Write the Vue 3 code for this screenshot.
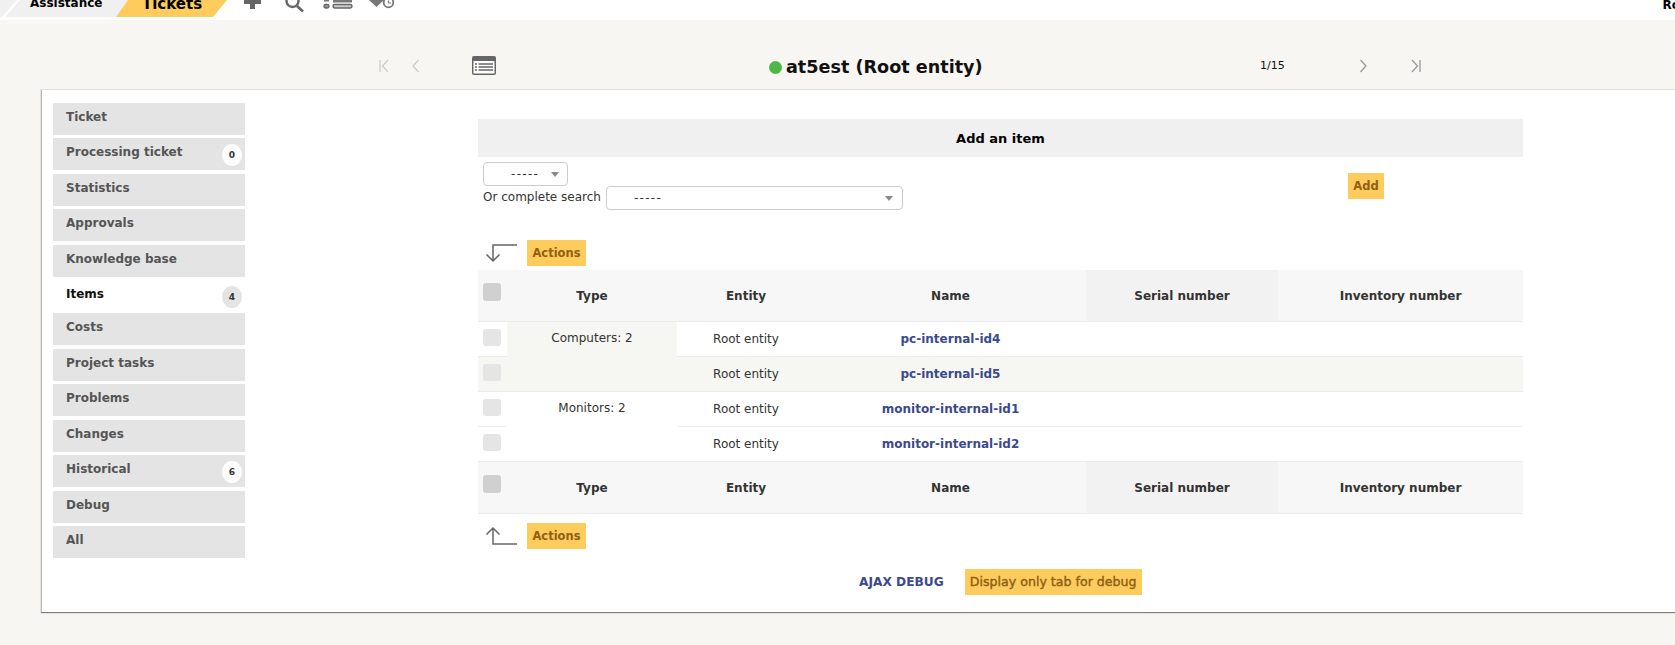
<script setup>
const tabs = [
  { label: 'Ticket' },
  { label: 'Processing ticket', badge: 0 },
  { label: 'Statistics' },
  { label: 'Approvals' },
  { label: 'Knowledge base' },
  { label: 'Items', badge: 4, active: true },
  { label: 'Costs' },
  { label: 'Project tasks' },
  { label: 'Problems' },
  { label: 'Changes' },
  { label: 'Historical', badge: 6 },
  { label: 'Debug' },
  { label: 'All' },
]
const cols = ['Type', 'Entity', 'Name', 'Serial number', 'Inventory number']
</script>

<template>
  <div class="page">
    <header class="top">
      <nav class="menu">
        <span class="crumb crumb-0"></span>
        <span class="crumb crumb-a">Assistance</span>
        <span class="crumb crumb-b">Tickets</span>
        <svg class="ic-plus" width="18" height="10" viewBox="0 0 18 10"><path d="M6 0h5v0h6v4h-6v5H6V4H0V0h6z" fill="#666"/></svg>
        <svg class="ic-search" width="22" height="14" viewBox="0 0 22 14"><circle cx="8.500" cy="1" r="6" fill="none" stroke="#666" stroke-width="2.400"/><path d="M13 6l6 5.500" stroke="#666" stroke-width="2.600"/></svg>
        <svg class="ic-list" width="30" height="10" viewBox="0 0 30 10"><rect x="1" y="0" width="5" height="1.500" fill="#777"/><rect x="1" y="4.500" width="5" height="3.500" rx="1.700" fill="#999" stroke="#666" stroke-width="1.400"/><rect x="10" y="0" width="19" height="2.500" fill="#777"/><rect x="10" y="4.500" width="19" height="3.500" rx="1.700" fill="#ccc" stroke="#666" stroke-width="1.400"/></svg>
        <svg class="ic-save" width="26" height="10" viewBox="0 0 26 10"><path d="M0 0h15l-7.500 7z" fill="#777"/><circle cx="19.500" cy="2.500" r="4.800" fill="none" stroke="#777" stroke-width="1.800"/><path d="M19.500 .5v2.500h2.500" fill="none" stroke="#777" stroke-width="1.200"/></svg>
      </nav>
      <span class="user">Root</span>
    </header>

    <div class="titlebar">
      <div class="pager-left">
        <svg width="10" height="14" viewBox="0 0 10 14"><path d="M1 1v12M9 1L3.500 7 9 13" fill="none" stroke="#ccc" stroke-width="1.300"/></svg>
        <svg class="prev" width="7" height="14" viewBox="0 0 7 14"><path d="M6.500 1L1 7l5.500 6" fill="none" stroke="#ccc" stroke-width="1.300"/></svg>
        <svg class="listicon" width="24" height="19" viewBox="0 0 24 19"><rect width="24" height="19" rx="2" fill="#666"/><rect x="1.500" y="5" width="21" height="12.500" fill="#fff"/><path d="M3 8h2M3 11h2M3 14h2M6.500 8H21M6.500 11H21M6.500 14H21" stroke="#666" stroke-width="1.400"/></svg>
      </div>
      <h1 class="title"><i class="dot"></i>at5est (Root entity)</h1>
      <div class="pager-right">
        <span class="count">1/15</span>
        <svg class="next" width="7" height="14" viewBox="0 0 7 14"><path d="M.5 1L6 7l-5.500 6" fill="none" stroke="#999" stroke-width="1.300"/></svg>
        <svg class="last" width="10" height="14" viewBox="0 0 10 14"><path d="M9 1v12M1 1l5.500 6L1 13" fill="none" stroke="#999" stroke-width="1.300"/></svg>
      </div>
    </div>

    <main class="card">
      <ul class="tabs">
        <li v-for="t in tabs" :key="t.label" class="tab" :class="{ active: t.active }">
          {{ t.label }}
          <span v-if="t.badge !== undefined" class="badge">{{ t.badge }}</span>
        </li>
      </ul>

      <section class="content">
        <div class="addhead">Add an item</div>
        <div class="addform">
          <div class="fields">
            <div class="select small"><span>-----</span><i class="caret"></i></div>
            <div class="searchline">
              <label>Or complete search</label>
              <div class="select large"><span>-----</span><i class="caret"></i></div>
            </div>
          </div>
          <button class="btn add">Add</button>
        </div>

        <div class="massive down">
          <svg width="34" height="20" viewBox="0 0 34 20"><path d="M33 2H9v16M2.500 11.500L9 18l6.500-6.500" fill="none" stroke="#666" stroke-width="1.500"/></svg>
          <button class="btn">Actions</button>
        </div>

        <table class="grid">
          <colgroup>
            <col class="c-check"><col class="c-type"><col class="c-entity"><col class="c-name"><col class="c-serial"><col class="c-inv">
          </colgroup>
          <thead>
            <tr>
              <th><i class="box head"></i></th>
              <th v-for="c in cols" :key="c" :class="{ sorted: c === 'Serial number' }">{{ c }}</th>
            </tr>
          </thead>
          <tbody>
            <tr>
              <td><i class="box"></i></td>
              <td rowspan="2" class="type tinted">Computers: 2</td>
              <td>Root entity</td>
              <td><a class="link">pc-internal-id4</a></td><td></td><td></td>
            </tr>
            <tr class="tinted">
              <td><i class="box"></i></td>
              <td>Root entity</td>
              <td><a class="link">pc-internal-id5</a></td><td></td><td></td>
            </tr>
            <tr>
              <td><i class="box"></i></td>
              <td rowspan="2" class="type">Monitors: 2</td>
              <td>Root entity</td>
              <td><a class="link">monitor-internal-id1</a></td><td></td><td></td>
            </tr>
            <tr>
              <td><i class="box"></i></td>
              <td>Root entity</td>
              <td><a class="link">monitor-internal-id2</a></td><td></td><td></td>
            </tr>
          </tbody>
          <tfoot>
            <tr>
              <th><i class="box head"></i></th>
              <th v-for="c in cols" :key="c" :class="{ sorted: c === 'Serial number' }">{{ c }}</th>
            </tr>
          </tfoot>
        </table>

        <div class="massive up">
          <svg width="34" height="20" viewBox="0 0 34 20"><path d="M33 18H9V2M2.500 8.500L9 2l6.500 6.500" fill="none" stroke="#666" stroke-width="1.500"/></svg>
          <button class="btn">Actions</button>
        </div>

        <div class="debug">
          <a class="link ajax">AJAX DEBUG</a>
          <button class="btn dbg">Display only tab for debug</button>
        </div>
      </section>
    </main>
  </div>
</template>

<style>
html, body { margin: 0; background: #f7f6f2; overflow: hidden; }
</style>

<style scoped>
.page {
  height: 645px;
  width: 1675px;
  overflow: hidden;
  background: #f7f6f2;
  font-family: "DejaVu Sans", Verdana, sans-serif;
  font-size: 12px;
  color: #333;
}
.top {
  height: 20px;
  background: #fff;
  display: flex;
  justify-content: space-between;
  overflow: hidden;
}
.menu { display: flex; align-items: flex-start; height: 20px; }
.crumb {
  display: block;
  height: 17px;
  color: #000;
  overflow: hidden;
}
.crumb-0 {
  width: 17px;
  margin-right: -12px;
  background: #f0f0f0;
  clip-path: polygon(0 0, 100% 0, 2px 100%, 0 100%);
}
.crumb-a {
  width: 123px;
  background: #f0f0f0;
  clip-path: polygon(15px 0, 100% 0, calc(100% - 12px) 100%, 0 100%);
  padding-left: 25px;
  box-sizing: border-box;
  font-size: 12px;
  font-weight: bold;
  line-height: 7px;
  white-space: nowrap;
}
.crumb-b {
  width: 111px;
  margin-left: -12px;
  background: #fecc5c;
  clip-path: polygon(12px 0, 100% 0, calc(100% - 14px) 100%, 0 100%);
  padding-left: 26px;
  box-sizing: border-box;
  font-size: 15px;
  font-weight: bold;
  line-height: 8px;
}
.ic-plus { margin-left: 17px; }
.ic-search { margin-left: 22px; }
.ic-list { margin-left: 17px; }
.ic-save { margin-left: 16px; }
.user { font-weight: bold; font-size: 12px; color: #000; line-height: 10px; margin-right: -19px; }

.titlebar {
  height: 69px;
  position: relative;
  display: flex;
  align-items: flex-start;
}
.pager-left { display: flex; align-items: flex-start; padding: 39px 0 0 379px; width: 140px; }
.prev { margin: 0 0 0 23px; }
.listicon { margin: -3px 0 0 53px; }
.title {
  margin: 35px 0 0 250px;
  font-size: 17.600px;
  line-height: 24px;
  font-weight: bold;
  color: #111;
  display: flex;
  align-items: center;
  white-space: nowrap;
}
.dot {
  width: 13px;
  height: 13px;
  border-radius: 50%;
  background: #4db848;
  margin-right: 4px;
}
.pager-right { position: absolute; left: 1260px; top: 38px; display: flex; align-items: flex-start; }
.count { font-size: 11px; line-height: 16px; color: #111; width: 100px; }
.next { margin-top: 1px; }
.last { margin: 1px 0 0 44px; }

.card {
  width: 1700px;
  height: 523px;
  margin-left: 41px;
  background: #fff;
  border-top: 1px solid #e2e1dc;
  border-left: 1px solid #b5b5b2;
  box-shadow: 0 1px 1px #808080;
  box-sizing: border-box;
  display: flex;
  align-items: flex-start;
}
.tabs {
  list-style: none;
  margin: 12.900px 0 0 11px;
  padding: 0;
  width: 192px;
}
.tab {
  height: 32px;
  margin-bottom: 3.500px;
  background: #e4e4e4;
  padding: 6px 0 0 13px;
  box-sizing: border-box;
  font-weight: bold;
  font-size: 12px;
  line-height: 16px;
  color: #555;
  position: relative;
}
.tab.active { background: #fff; color: #111; height: 33px; margin-bottom: 0; }
.badge {
  position: absolute;
  right: 3px;
  top: 6px;
  width: 20px;
  height: 22px;
  border-radius: 50%;
  background: #fff;
  font-size: 9px;
  line-height: 22px;
  text-align: center;
  color: #333;
}
.active .badge { background: #e4e4e4; }

.content { margin: 29px 0 0 233px; width: 1045px; }
.addhead {
  height: 38px;
  background: #f0f0f0;
  text-align: center;
  font-weight: bold;
  font-size: 13px;
  line-height: 39px;
  color: #000;
}
.addform { height: 83px; position: relative; }
.fields { padding: 5px 0 0 5px; }
.select {
  height: 24px;
  box-sizing: border-box;
  border: 1px solid #ccc;
  border-radius: 4px;
  background: #fff;
  position: relative;
  line-height: 22px;
  font-size: 12px;
  letter-spacing: 1.300px;
}
.select.small { width: 85px; padding-left: 27px; }
.select.large { width: 297px; padding-left: 27px; }
.caret {
  position: absolute;
  right: 8px;
  top: 9px;
  border-left: 4px solid transparent;
  border-right: 4px solid transparent;
  border-top: 5px solid #888;
}
.select.large .caret { right: 9px; }
.searchline { display: flex; align-items: center; gap: 5px; }
.searchline label { font-size: 12px; color: #333; margin-top: -3px; }
.btn {
  font-family: inherit;
  border: 0;
  background: #fecc5c;
  color: #8f5f14;
  font-weight: bold;
  font-size: 11.500px;
  height: 26px;
  padding: 0 5px;
}
.add { position: absolute; left: 870px; top: 16px; width: 36px; padding: 0; }
.dbg {
  font-size: 12.600px;
  font-weight: normal;
  -webkit-text-stroke: 0.4px #8f5f14;
  width: 177px;
  padding: 0;
  white-space: nowrap;
}
.massive { display: flex; align-items: center; gap: 9px; padding-left: 6px; height: 26px; }
.massive .btn { width: 59px; padding: 0; }
.down { margin-bottom: 4px; }
.up { margin-top: 9px; }
.grid {
  width: 1045px;
  border-collapse: collapse;
  table-layout: fixed;
  border-spacing: 0;
}
.c-check { width: 29px; }
.c-type { width: 170px; }
.c-entity { width: 138px; }
.c-name { width: 271px; }
.c-serial { width: 192px; }
.c-inv { width: 245px; }
th {
  height: 51px;
  background: #f7f7f7;
  border-bottom: 1px solid #ececec;
  padding: 2px 0 0;
  font-size: 12px;
  color: #333;
  box-sizing: border-box;
  vertical-align: middle;
  position: relative;
}
th.sorted { background: #f2f2f2; }
tfoot th { border-top: 1px solid #ececec; height: 52px; }
td {
  height: 35px;
  padding: 0;
  text-align: center;
  border-bottom: 1px solid #ececec;
  font-size: 12px;
  color: #333;
  box-sizing: border-box;
}
.tinted, .tinted td { background: #f6f6f2; }
td.type { vertical-align: top; padding-top: 8px; line-height: 16px; }
.link { color: #3a4a8c; font-weight: bold; font-size: 12px; }
.box {
  display: block;
  width: 18px;
  height: 17px;
  margin-left: 5px;
  background: #e5e5e5;
  border-radius: 3px;
  margin-top: -3px;
}
.box.head { height: 18px; background: #d0d0d0; margin-top: -8px; }
.debug { display: flex; align-items: center; gap: 21px; margin: 20px 0 0 381px; }
.ajax { font-size: 12.200px; }
</style>
